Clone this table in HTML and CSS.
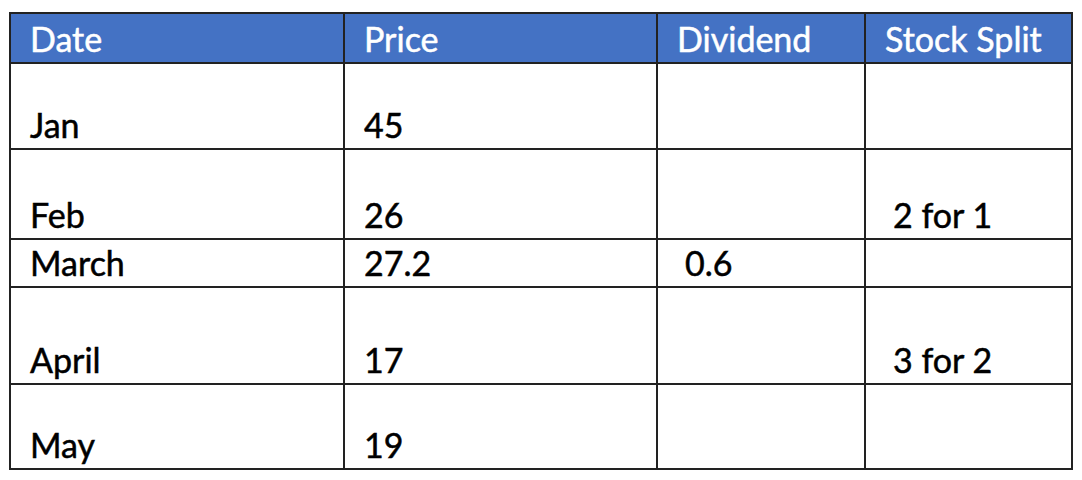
FILE: index.html
```html
<!DOCTYPE html>
<html>
<head>
<meta charset="utf-8">
<link rel="stylesheet" href="styles.css">
</head>
<body>
<table class="grid">
  <colgroup>
    <col class="c1"><col class="c2"><col class="c3"><col class="c4">
  </colgroup>
  <thead>
    <tr class="r-head"><th>Date</th><th>Price</th><th>Dividend</th><th>Stock Split</th></tr>
  </thead>
  <tbody>
    <tr class="r-jan"><td>Jan</td><td>45</td><td></td><td></td></tr>
    <tr class="r-feb"><td>Feb</td><td>26</td><td></td><td class="ind">2 for 1</td></tr>
    <tr class="r-mar"><td>March</td><td>27.2</td><td class="ind">0.6</td><td></td></tr>
    <tr class="r-apr"><td>April</td><td>17</td><td></td><td class="ind">3 for 2</td></tr>
    <tr class="r-may"><td>May</td><td>19</td><td></td><td></td></tr>
  </tbody>
</table>
</body>
</html>
```
FILE: styles.css
```css
html, body {
  margin: 0;
  padding: 0;
  background: #ffffff;
}
body {
  padding: 12px 0 0 9px;
  font-family: "Lato", "Open Sans", sans-serif;
}
.grid {
  border-collapse: collapse;
  table-layout: fixed;
  width: 1062px;
  font-size: 34px;
  color: #000000;
}
.c1 { width: 334px; }
.c2 { width: 313px; }
.c3 { width: 208px; }
.c4 { width: 207px; }
.grid th,
.grid td {
  border: 2px solid #222222;
  padding: 0 0 6px 19px;
  vertical-align: bottom;
  text-align: left;
  line-height: 34px;
  font-weight: 400;
  white-space: pre;
  -webkit-text-stroke: 0.5px currentColor;
}
.grid th {
  background: #4472c4;
  color: #ffffff;
}
.grid td.ind { padding-left: 27px; }
.r-head { height: 50px; }
.r-jan { height: 86px; }
.r-feb { height: 90px; }
.r-mar { height: 48px; }
.r-apr { height: 97px; }
.r-may { height: 85px; }
```
